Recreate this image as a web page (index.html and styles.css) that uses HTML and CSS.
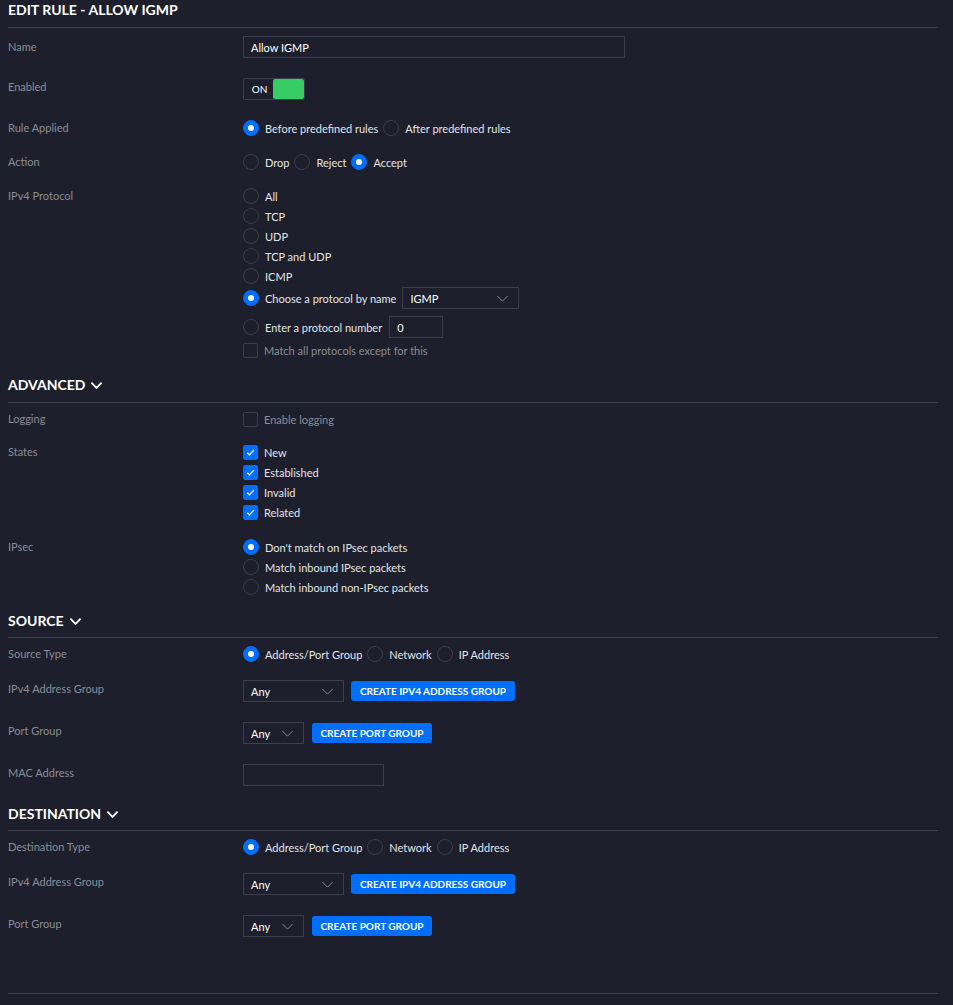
FILE: index.html
```html
<!DOCTYPE html>
<html>
<head>
<meta charset="utf-8">
<link rel="stylesheet" href="styles.css">
</head>
<body>
<div class="page">
  <h2 class="heading">EDIT RULE - ALLOW IGMP</h2>

  <div class="row r-name">
    <div class="label lh22">Name</div>
    <div class="ctrl"><div class="input w-name">Allow IGMP</div></div>
  </div>

  <div class="row r-enabled">
    <div class="label lh18">Enabled</div>
    <div class="ctrl">
      <div class="toggle"><span class="t-on">ON</span><span class="t-green"></span></div>
    </div>
  </div>

  <div class="row r-applied">
    <div class="label">Rule Applied</div>
    <div class="ctrl">
      <div class="line">
        <span class="opt"><span class="radio on"></span>Before predefined rules</span>
        <span class="opt"><span class="radio"></span>After predefined rules</span>
      </div>
    </div>
  </div>

  <div class="row r-gap14">
    <div class="label">Action</div>
    <div class="ctrl">
      <div class="line">
        <span class="opt"><span class="radio"></span>Drop</span>
        <span class="opt"><span class="radio"></span>Reject</span>
        <span class="opt"><span class="radio on"></span>Accept</span>
      </div>
    </div>
  </div>

  <div class="row r-gap14">
    <div class="label">IPv4 Protocol</div>
    <div class="ctrl">
      <div class="line"><span class="opt"><span class="radio"></span>All</span></div>
      <div class="line"><span class="opt"><span class="radio"></span>TCP</span></div>
      <div class="line"><span class="opt"><span class="radio"></span>UDP</span></div>
      <div class="line"><span class="opt"><span class="radio"></span>TCP and UDP</span></div>
      <div class="line"><span class="opt"><span class="radio"></span>ICMP</span></div>
      <div class="line l-choose">
        <span class="opt"><span class="radio on"></span>Choose a protocol by name</span>
        <div class="select w-proto"><span>IGMP</span><svg class="chev" viewBox="0 0 14 8"><path d="M1 1l6 6 6-6" fill="none" stroke="#8a8d96" stroke-width="1.1"/></svg></div>
      </div>
      <div class="line l-enter">
        <span class="opt"><span class="radio"></span>Enter a protocol number</span>
        <div class="input w-num">0</div>
      </div>
      <div class="line l-match">
        <span class="opt dim"><span class="check"></span>Match all protocols except for this</span>
      </div>
    </div>
  </div>

  <h2 class="heading section s-adv">ADVANCED <svg class="hchev" viewBox="0 0 14 9"><path d="M1.5 1.5l5.5 5.5 5.5-5.5" fill="none" stroke="#fff" stroke-width="2"/></svg></h2>

  <div class="row r-first">
    <div class="label">Logging</div>
    <div class="ctrl">
      <div class="line"><span class="opt dim"><span class="check"></span>Enable logging</span></div>
    </div>
  </div>

  <div class="row r-gap13">
    <div class="label">States</div>
    <div class="ctrl">
      <div class="line"><span class="opt"><span class="check on"><svg viewBox="0 0 14 14"><path d="M3.5 7.2l2.4 2.4 4.6-5" fill="none" stroke="#fff" stroke-width="1.4"/></svg></span>New</span></div>
      <div class="line"><span class="opt"><span class="check on"><svg viewBox="0 0 14 14"><path d="M3.5 7.2l2.4 2.4 4.6-5" fill="none" stroke="#fff" stroke-width="1.4"/></svg></span>Established</span></div>
      <div class="line"><span class="opt"><span class="check on"><svg viewBox="0 0 14 14"><path d="M3.5 7.2l2.4 2.4 4.6-5" fill="none" stroke="#fff" stroke-width="1.4"/></svg></span>Invalid</span></div>
      <div class="line"><span class="opt"><span class="check on"><svg viewBox="0 0 14 14"><path d="M3.5 7.2l2.4 2.4 4.6-5" fill="none" stroke="#fff" stroke-width="1.4"/></svg></span>Related</span></div>
    </div>
  </div>

  <div class="row r-gap15">
    <div class="label">IPsec</div>
    <div class="ctrl">
      <div class="line"><span class="opt"><span class="radio on"></span>Don't match on IPsec packets</span></div>
      <div class="line"><span class="opt"><span class="radio"></span>Match inbound IPsec packets</span></div>
      <div class="line"><span class="opt"><span class="radio"></span>Match inbound non-IPsec packets</span></div>
    </div>
  </div>

  <h2 class="heading section s-src">SOURCE <svg class="hchev" viewBox="0 0 14 9"><path d="M1.5 1.5l5.5 5.5 5.5-5.5" fill="none" stroke="#fff" stroke-width="2"/></svg></h2>

  <div class="row r-first">
    <div class="label">Source Type</div>
    <div class="ctrl">
      <div class="line">
        <span class="opt"><span class="radio on"></span>Address/Port Group</span>
        <span class="opt"><span class="radio"></span>Network</span>
        <span class="opt"><span class="radio"></span>IP Address</span>
      </div>
    </div>
  </div>

  <div class="row r-gap17">
    <div class="label lh18">IPv4 Address Group</div>
    <div class="ctrl">
      <div class="line-ctl">
        <div class="select w-any"><span>Any</span><svg class="chev" viewBox="0 0 14 8"><path d="M1 1l6 6 6-6" fill="none" stroke="#8a8d96" stroke-width="1.1"/></svg></div>
        <button class="btn">CREATE IPV4 ADDRESS GROUP</button>
      </div>
    </div>
  </div>

  <div class="row r-gap21">
    <div class="label lh18">Port Group</div>
    <div class="ctrl">
      <div class="line-ctl">
        <div class="select w-port"><span>Any</span><svg class="chev" viewBox="0 0 14 8"><path d="M1 1l6 6 6-6" fill="none" stroke="#8a8d96" stroke-width="1.1"/></svg></div>
        <button class="btn b-port">CREATE PORT GROUP</button>
      </div>
    </div>
  </div>

  <div class="row r-gap20">
    <div class="label lh18">MAC Address</div>
    <div class="ctrl"><div class="input w-mac"></div></div>
  </div>

  <h2 class="heading section s-dst">DESTINATION <svg class="hchev" viewBox="0 0 14 9"><path d="M1.5 1.5l5.5 5.5 5.5-5.5" fill="none" stroke="#fff" stroke-width="2"/></svg></h2>

  <div class="row r-first">
    <div class="label">Destination Type</div>
    <div class="ctrl">
      <div class="line">
        <span class="opt"><span class="radio on"></span>Address/Port Group</span>
        <span class="opt"><span class="radio"></span>Network</span>
        <span class="opt"><span class="radio"></span>IP Address</span>
      </div>
    </div>
  </div>

  <div class="row r-gap17">
    <div class="label lh18">IPv4 Address Group</div>
    <div class="ctrl">
      <div class="line-ctl">
        <div class="select w-any"><span>Any</span><svg class="chev" viewBox="0 0 14 8"><path d="M1 1l6 6 6-6" fill="none" stroke="#8a8d96" stroke-width="1.1"/></svg></div>
        <button class="btn">CREATE IPV4 ADDRESS GROUP</button>
      </div>
    </div>
  </div>

  <div class="row r-gap21">
    <div class="label lh18">Port Group</div>
    <div class="ctrl">
      <div class="line-ctl">
        <div class="select w-port"><span>Any</span><svg class="chev" viewBox="0 0 14 8"><path d="M1 1l6 6 6-6" fill="none" stroke="#8a8d96" stroke-width="1.1"/></svg></div>
        <button class="btn b-port">CREATE PORT GROUP</button>
      </div>
    </div>
  </div>

  <div class="footer-line"></div>
</div>
</body>
</html>
```

FILE: styles.css
```css
* { box-sizing: border-box; }
html, body {
  margin: 0;
  padding: 0;
  background: #1d1f2c;
}
body {
  font-family: Lato, "Noto Sans", sans-serif;
  font-size: 11px;
  color: #e3e4e8;
  height: 1005px;
  overflow: hidden;
}
.page {
  padding: 0 15px 0 8px;
}
.heading {
  margin: 0;
  font-size: 14px;
  font-weight: 700;
  line-height: 20px;
  color: #ffffff;
  padding-bottom: 7px;
  border-bottom: 1px solid #3d404b;
  display: flex;
  align-items: center;
  gap: 5px;
}
.section { margin-top: 15px; }
.s-src { margin-top: 14px; padding-bottom: 6px; }
.s-dst { margin-top: 18px; padding-bottom: 6px; }
.hchev { width: 13px; height: 9px; }

.row {
  display: grid;
  grid-template-columns: 235px 1fr;
  align-items: start;
}
.label {
  color: #8a8d96;
  line-height: 20px;
}
.lh22 { line-height: 22px; }
.lh18 { line-height: 18px; }

.r-name { margin-top: 8px; }
.r-enabled { margin-top: 20px; }
.r-applied { margin-top: 18px; }
.r-gap14 { margin-top: 14px; }
.r-gap13 { margin-top: 13px; }
.r-gap15 { margin-top: 15px; }
.r-gap17 { margin-top: 16px; }
.r-gap21 { margin-top: 20px; }
.r-gap20 { margin-top: 20px; }
.r-first { margin-top: 6px; }

.ctrl { display: flex; flex-direction: column; }
.line {
  display: flex;
  align-items: center;
  height: 20px;
  gap: 5px;
}
.line-ctl { display: flex; align-items: center; gap: 7px; height: 22px; }
.l-choose { height: 22px; margin-top: 1px; gap: 6px; }
.l-enter { height: 22px; margin-top: 7px; gap: 7px; }
.l-match { margin-top: 2px; }

.opt {
  display: inline-flex;
  align-items: center;
  gap: 6px;
  color: #e3e4e8;
  white-space: nowrap;
}
.opt.dim { color: #8a8d96; }

.radio {
  width: 16px;
  height: 16px;
  border-radius: 50%;
  border: 1px solid #3c3f4a;
  display: inline-block;
  flex: none;
  position: relative;
}
.radio.on {
  background: #006fff;
  border-color: #006fff;
}
.radio.on::after {
  content: "";
  position: absolute;
  left: 4px;
  top: 4px;
  width: 6px;
  height: 6px;
  border-radius: 50%;
  background: #ffffff;
}
.check {
  width: 15px;
  height: 15px;
  border-radius: 2px;
  border: 1px solid #3c3f4a;
  display: inline-block;
  flex: none;
}
.check.on {
  background: #006fff;
  border-color: #006fff;
  display: inline-flex;
}
.check svg { width: 13px; height: 13px; }

.input, .select {
  height: 22px;
  border: 1px solid #3c3f4a;
  background: #1d1f2c;
  color: #ffffff;
  display: flex;
  align-items: center;
  padding: 0 7px;
  font-size: 11px;
}
.w-name { width: 382px; }
.w-num { width: 54px; }
.w-mac { width: 141px; }
.select { justify-content: space-between; padding: 0 9px 0 7px; }
.w-proto { width: 117px; }
.w-any { width: 101px; }
.w-port { width: 61px; }
.chev { width: 13px; height: 7px; }

.toggle {
  width: 62px;
  height: 22px;
  border: 1px solid #3c3f4a;
  border-radius: 2px;
  display: flex;
  overflow: hidden;
}
.t-on {
  width: 29px;
  color: #ffffff;
  font-size: 10px;
  display: flex;
  align-items: center;
  justify-content: center;
  padding-left: 2px;
}
.t-green {
  flex: 1;
  background: #38cc65;
  border-radius: 2px;
}

.btn {
  height: 20px;
  border: none;
  border-radius: 3px;
  background: #006fff;
  color: #ffffff;
  font-family: Lato, "Noto Sans", sans-serif;
  font-size: 10px;
  font-weight: 700;
  padding: 0;
  white-space: nowrap;
  text-align: center;
  width: 164px;
}
.b-port { width: 120px; margin-left: 1px; }

.footer-line {
  margin-top: 56px;
  border-top: 1px solid #3d404b;
}
```
